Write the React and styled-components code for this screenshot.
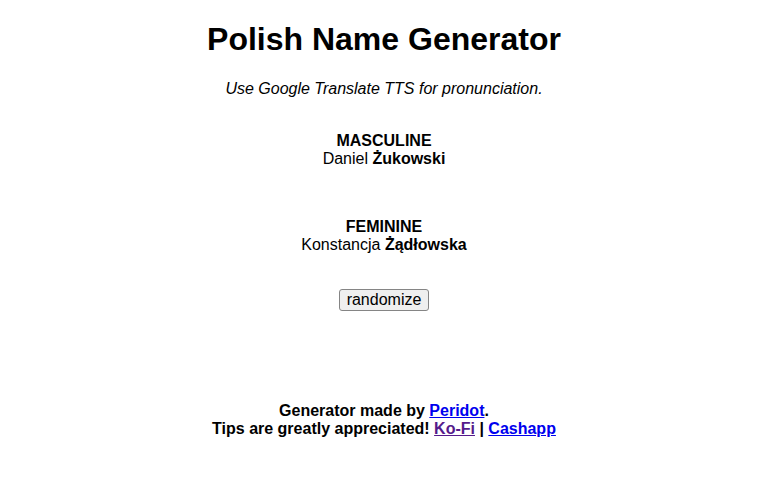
import React, { useState } from "react";
import styled, { createGlobalStyle } from "styled-components";

const GlobalStyle = createGlobalStyle`
  html, body {
    margin: 0;
    padding: 0;
    background: #ffffff;
  }
  body {
    font-family: "Liberation Sans", Arial, sans-serif;
    color: #000000;
  }
`;

const Page = styled.main`
  display: flex;
  flex-direction: column;
  align-items: center;
  text-align: center;
  font-size: 16px;
  line-height: 18px;
`;

const Title = styled.h1`
  margin: 21px 0 0;
  font-size: 32px;
  line-height: 37px;
  font-weight: bold;
`;

const Note = styled.p`
  margin: 22px 0 0;
  font-style: italic;
`;

const NameBlock = styled.section`
  margin-top: ${(p) => p.$gap}px;
  display: flex;
  flex-direction: column;
`;

const Label = styled.strong`
  font-weight: bold;
`;

const Surname = styled.b`
  font-weight: bold;
`;

const Button = styled.button`
  margin-top: 35px;
  font-family: "Liberation Sans", Arial, sans-serif;
  font-size: 16px;
  line-height: 18px;
  padding: 1px 7px;
  color: #000;
  background: #efefef;
  border: 1px solid #858585;
  border-radius: 3px;
  cursor: pointer;
`;

const Footer = styled.footer`
  margin-top: 91px;
  font-weight: bold;
  display: flex;
  flex-direction: column;
`;

const Link = styled.a`
  color: ${(p) => (p.$visited ? "#551a8b" : "#0000ee")};
  text-decoration: underline;
`;

const names = {
  masculine: [
    ["Daniel", "Żukowski"],
    ["Jakub", "Kowalski"],
    ["Mateusz", "Wiśniewski"],
  ],
  feminine: [
    ["Konstancja", "Żądłowska"],
    ["Zofia", "Nowakowska"],
    ["Agnieszka", "Wójcik"],
  ],
};

export default function App() {
  const [idx, setIdx] = useState([0, 0]);
  const [m1, m2] = names.masculine[idx[0]];
  const [f1, f2] = names.feminine[idx[1]];

  const randomize = () =>
    setIdx([
      Math.floor(Math.random() * names.masculine.length),
      Math.floor(Math.random() * names.feminine.length),
    ]);

  return (
    <>
      <GlobalStyle />
      <Page>
        <Title>Polish Name Generator</Title>
        <Note>Use Google Translate TTS for pronunciation.</Note>

        <NameBlock $gap={34}>
          <Label>MASCULINE</Label>
          <span>
            {m1} <Surname>{m2}</Surname>
          </span>
        </NameBlock>

        <NameBlock $gap={50}>
          <Label>FEMININE</Label>
          <span>
            {f1} <Surname>{f2}</Surname>
          </span>
        </NameBlock>

        <Button onClick={randomize}>randomize</Button>

        <Footer>
          <span>
            Generator made by <Link href="#">Peridot</Link>.
          </span>
          <span>
            Tips are greatly appreciated! <Link href="#" $visited>Ko-Fi</Link> |{" "}
            <Link href="#">Cashapp</Link>
          </span>
        </Footer>
      </Page>
    </>
  );
}
